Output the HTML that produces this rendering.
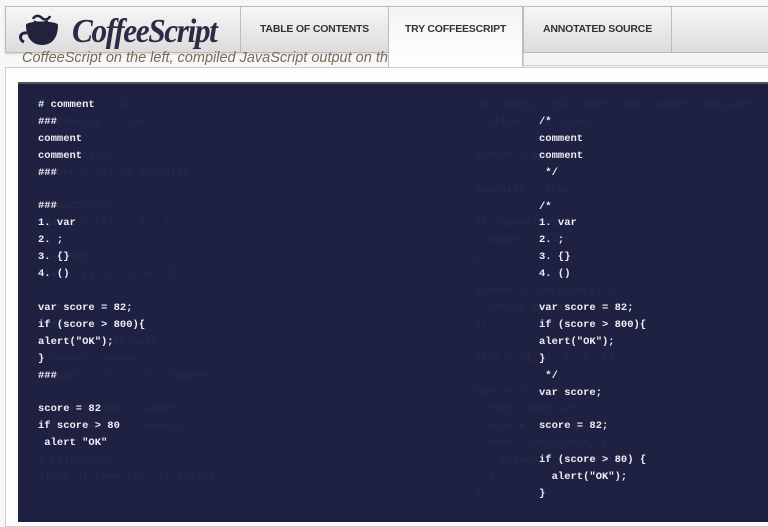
<!DOCTYPE html>
<html><head><style>
*{margin:0;padding:0;box-sizing:border-box}
body{width:768px;height:514px;overflow:hidden;background:#f7f7f7;font-family:"Liberation Sans",sans-serif;position:relative}
.nav{position:absolute;left:5px;top:6px;width:770px;height:47px;border:1px solid #bcbcbc;background:linear-gradient(#f6f6f6,#dcdcdc);box-shadow:0 1px 2px rgba(0,0,0,.15)}
.tab{position:absolute;top:0;height:46px;border-left:1px solid #bcbcbc;font-size:10.5px;font-weight:bold;color:#333;line-height:44px;text-align:center;letter-spacing:-.2px}
.logo{position:absolute;left:66px;top:6px;font-family:"Liberation Serif",serif;font-style:italic;font-weight:bold;font-size:34px;color:#2b2b45;letter-spacing:-1.5px;transform:scaleX(.92);transform-origin:left}
.strip{position:absolute;left:523px;top:53px;width:250px;height:13px;background:#f4f4f4;border:1px solid #ccc;border-top:none}
.sub{position:absolute;left:22px;top:50px;font-size:14.5px;font-style:italic;color:#7a6a55;width:366px;overflow:hidden;white-space:nowrap}
.panel{position:absolute;left:5px;top:67px;width:770px;height:460px;background:#fdfdfd;border:1px solid #ccc}
.code{position:absolute;left:18px;top:82px;width:760px;height:440px;background:#1f2142;border-top:2px solid #555}
pre{position:absolute;font-family:"Liberation Mono","DejaVu Sans Mono",monospace;font-weight:bold;font-size:10.5px;line-height:16.9px;color:#eeeef4}
.ghost{color:#272a4a;font-weight:normal}
</style></head><body>
<div class="nav">
<svg style="position:absolute;left:11px;top:5px" width="48" height="38" viewBox="0 0 48 38">
<path d="M16 7c2-4 6-4 9-1s7 1 8-2" stroke="#22223d" stroke-width="2.5" fill="none"/>
<path d="M17 9c3 2 9 2 14 0" stroke="#22223d" stroke-width="1.5" fill="none"/>
<path d="M9 13h32c0 10-4 20-16 20s-16-10-16-20z" fill="#22223d"/>
<path d="M10 21c-7-1-9 6-3 9" stroke="#22223d" stroke-width="3" fill="none"/>
<ellipse cx="25" cy="13" rx="16" ry="3.5" fill="#22223d"/>
</svg>
<div class="logo">CoffeeScript</div>
<div class="tab" style="left:234px;width:148px">TABLE OF CONTENTS</div>
<div class="tab" style="left:382px;width:135px;height:60px;background:linear-gradient(#f4f4f4,#fff);border-right:1px solid #bcbcbc">TRY COFFEESCRIPT</div>
<div class="tab" style="left:517px;width:148px">ANNOTATED SOURCE</div>
<div class="tab" style="left:665px;width:110px"></div>
</div>
<div class="strip"></div>
<div class="panel"></div>
<div class="sub">CoffeeScript on the left, compiled JavaScript output on the right.</div>
<div class="code"></div>
<pre class="ghost" style="left:38px;top:97px">
  number   = 42
  opposite = true

# Conditions:
number = -42 if opposite

# Functions:
square = (x) -> x * x

# Arrays:
list = [1, 2, 3, 4, 5]

# Objects:
math =
  root:   Math.sqrt
  square: square
  cube:   (x) -> x * square x

race = (winner, runners...) ->
  print winner, runners

# Existence:
alert "I knew it!" if elvis?</pre>
<pre class="ghost" style="left:475px;top:97px">var cubes, list, math, num, number, opposite, race
  slice = [].slice;

number = 42;

opposite = true;

if (opposite) {
  number = -42;
}

square = function(x) {
  return x * x;
};

list = [1, 2, 3, 4, 5];

math = {
  root: Math.sqrt,
  square: square,
  cube: function(x) {
    return x * square(x);
  }
};</pre>
<pre style="left:38px;top:97px"># comment
###
comment
comment
###

###
1. var
2. ;
3. {}
4. ()

var score = 82;
if (score > 800){
alert("OK");
}
###

score = 82
if score > 80
 alert "OK"</pre>
<pre style="left:539px;top:114px">/*
comment
comment
 */

/*
1. var
2. ;
3. {}
4. ()

var score = 82;
if (score > 800){
alert("OK");
}
 */
var score;

score = 82;

if (score > 80) {
  alert("OK");
}</pre>
</body></html>
